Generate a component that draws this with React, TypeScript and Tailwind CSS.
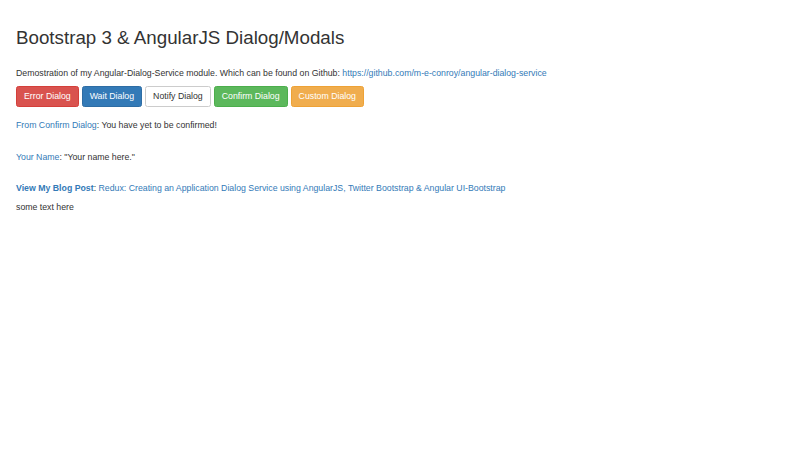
import React from "react";

const buttons = [
  { label: "Error Dialog", cls: "bg-[#d9534f] border-[#d43f3a] text-white" },
  { label: "Wait Dialog", cls: "bg-[#337ab7] border-[#2e6da4] text-white" },
  { label: "Notify Dialog", cls: "bg-white border-[#ccc] text-[#333]" },
  { label: "Confirm Dialog", cls: "bg-[#5cb85c] border-[#4cae4c] text-white" },
  { label: "Custom Dialog", cls: "bg-[#f0ad4e] border-[#eea236] text-white" },
];

export default function App() {
  return (
    <div className="w-[800px] h-[450px] bg-white px-[16px] pt-[27.5px] text-[#333] font-['Liberation_Sans',Arial,sans-serif] text-[8.75px] leading-[12.5px]">
      <h1 className="text-[18.75px] leading-[20.6px] font-normal mb-[19px]">
        Bootstrap 3 &amp; AngularJS Dialog/Modals
      </h1>
      <p className="mb-[6.25px]">
        Demostration of my Angular-Dialog-Service module. Which can be found on Github:{" "}
        <a className="text-[#337ab7]" href="#">
          https://github.com/m-e-conroy/angular-dialog-service
        </a>
      </p>
      <div className="flex gap-[3px]">
        {buttons.map((b) => (
          <button
            key={b.label}
            type="button"
            className={`h-[21.25px] px-[7px] rounded-[2.5px] border-[1px] text-[8.75px] leading-[12.5px] ${b.cls}`}
          >
            {b.label}
          </button>
        ))}
      </div>
      <p className="mt-[12.25px] mb-[6.25px]">
        <a className="text-[#337ab7]" href="#">From Confirm Dialog</a>: You have yet to be confirmed!
      </p>
      <div className="h-[12.5px]" />
      <p className="mb-[6.25px]">
        <a className="text-[#337ab7]" href="#">Your Name</a>: "Your name here."
      </p>
      <div className="h-[12.5px]" />
      <p className="mb-[6.25px]">
        <a className="text-[#337ab7] font-bold" href="#">View My Blog Post</a>:{" "}
        <a className="text-[#337ab7]" href="#">
          Redux: Creating an Application Dialog Service using AngularJS, Twitter Bootstrap &amp; Angular UI-Bootstrap
        </a>
      </p>
      <p>some text here</p>
    </div>
  );
}
